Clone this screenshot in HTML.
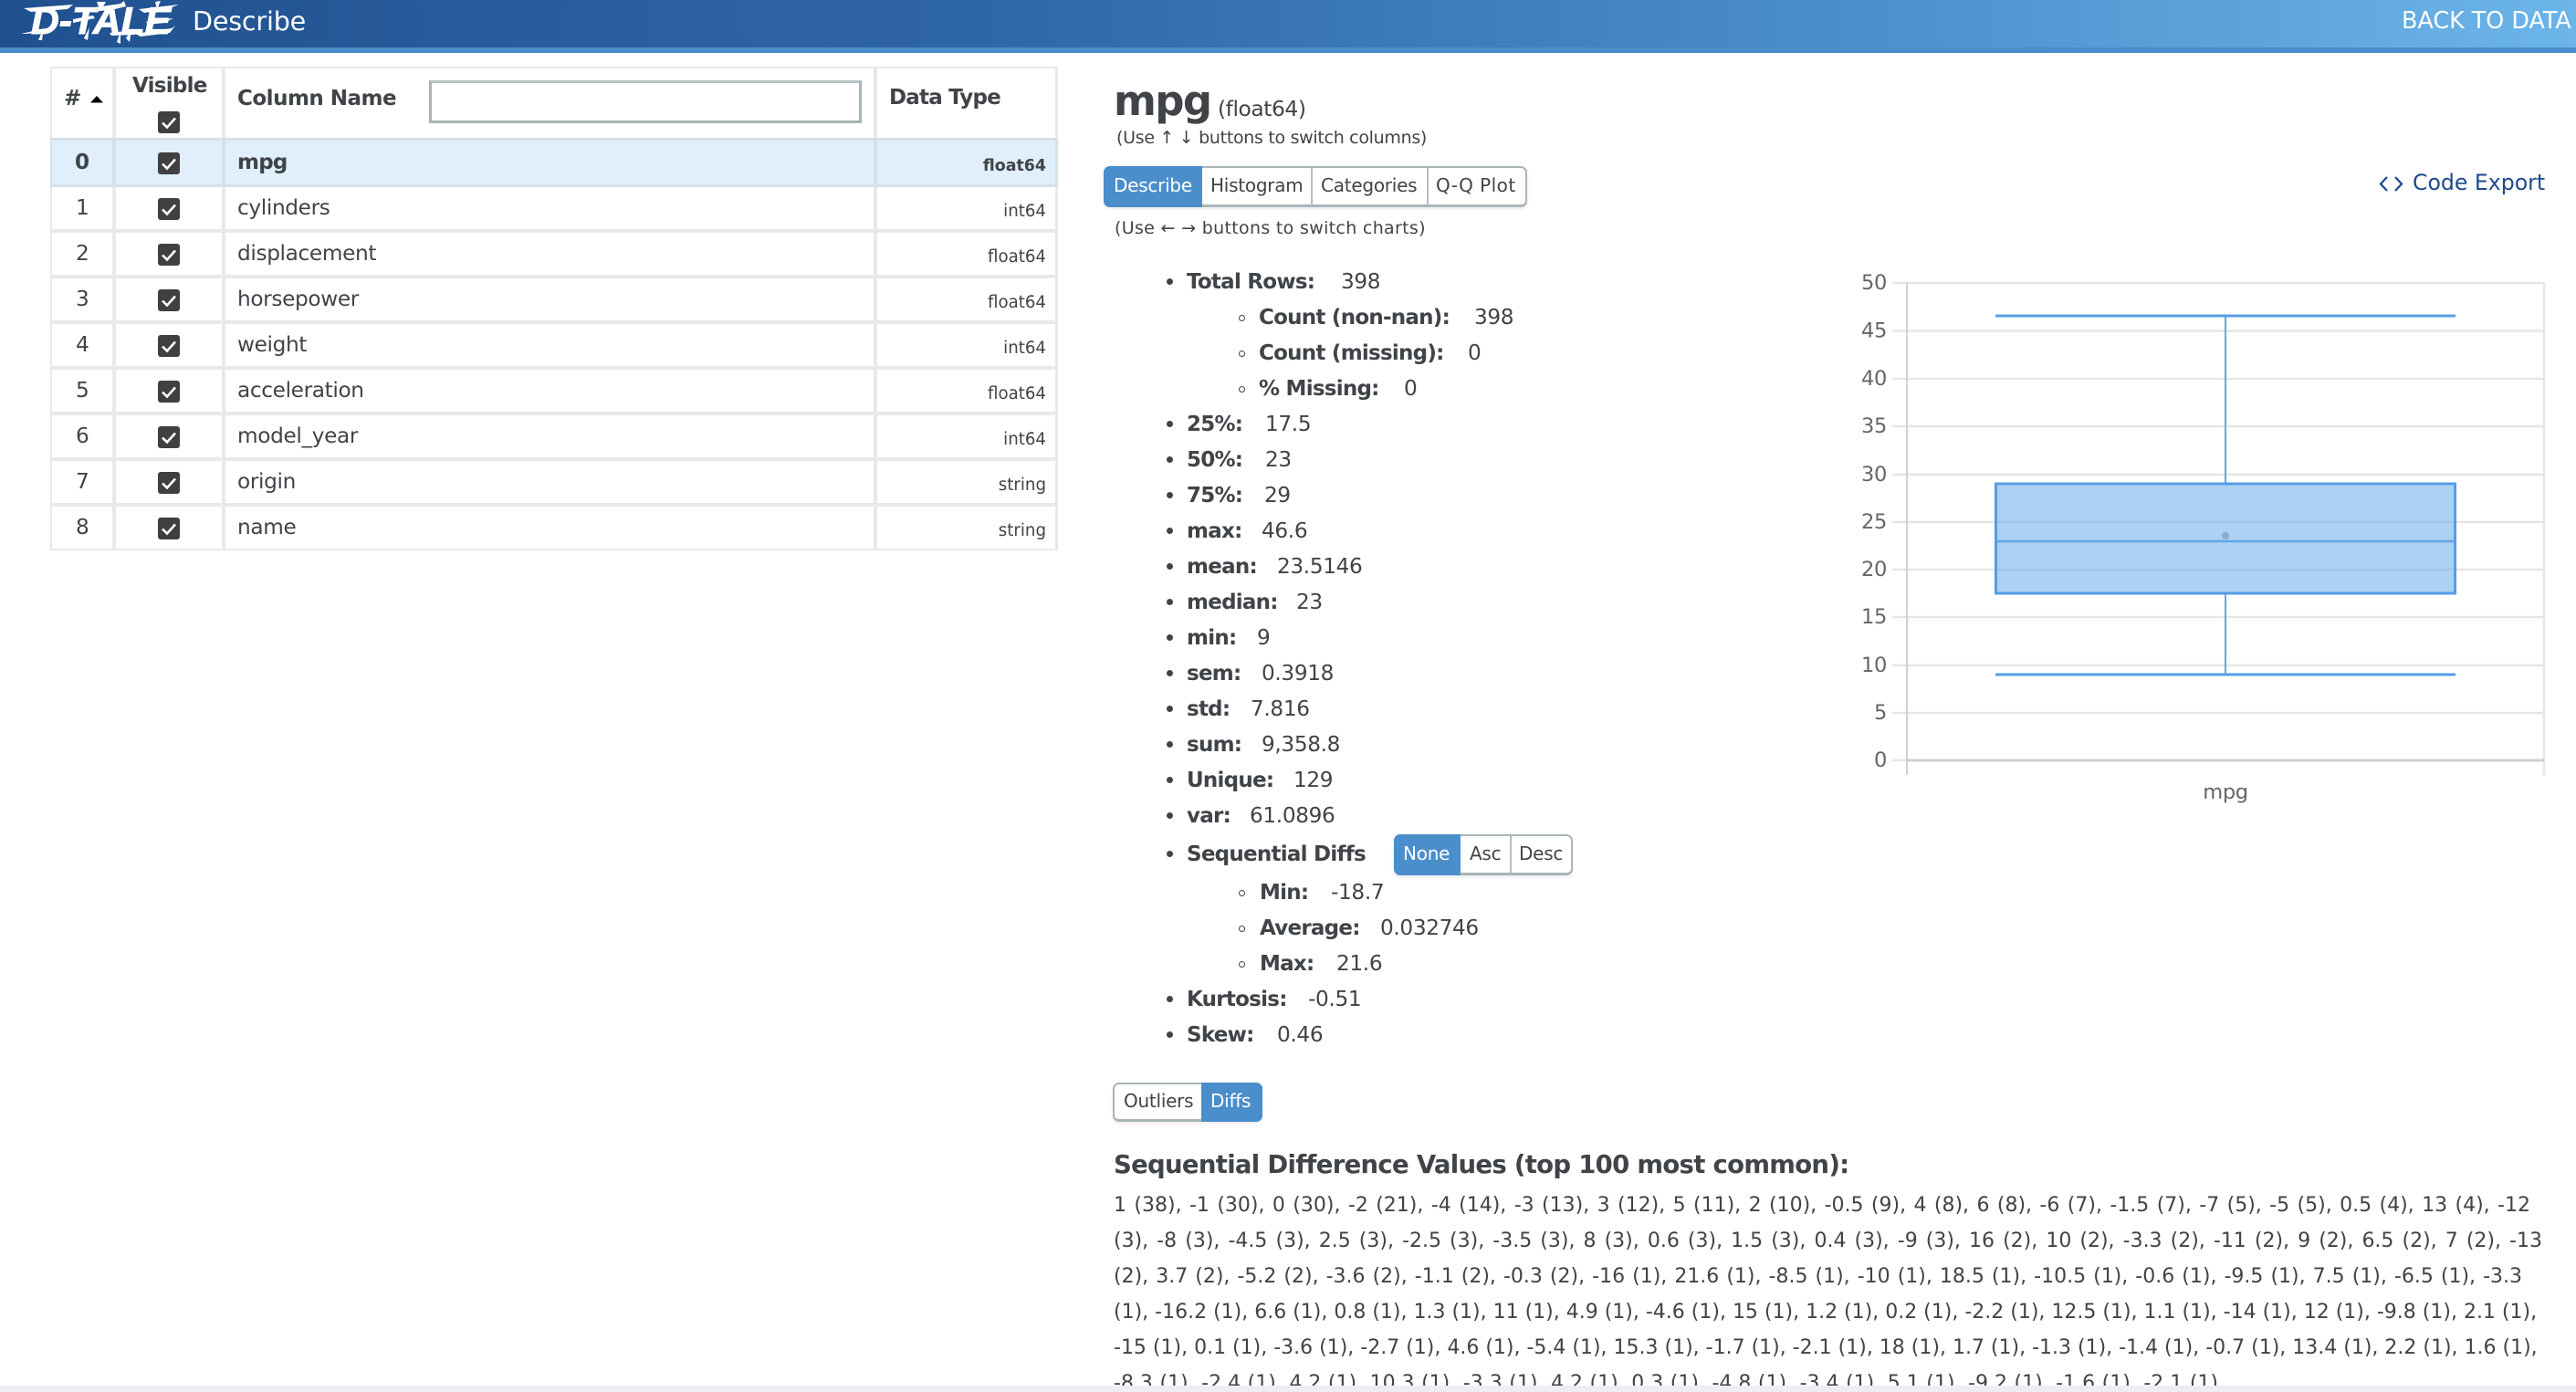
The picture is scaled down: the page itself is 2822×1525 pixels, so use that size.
<!DOCTYPE html>
<html lang="en"><head><meta charset="utf-8"><title>D-Tale Describe</title>
<style>
html,body{margin:0;padding:0;background:#fff}
#p{position:relative;width:2822px;height:1525px;overflow:hidden;background:#fff;font-family:"DejaVu Sans","Liberation Sans",sans-serif;color:#404448;font-size:23.2px;letter-spacing:-.35px}
.t{position:absolute;white-space:pre;line-height:40px;height:40px;margin-top:.5px}
.b{font-weight:700;font-size:23px;letter-spacing:-.75px}
.r{position:absolute;background:#fff}
.cb{position:absolute;width:24px;height:24px;background:#404040;border-radius:3px;left:173px}
.cb svg{display:block}
.d{position:absolute;left:1278px;width:7px;height:7px;border-radius:50%;background:#404448;margin-top:.5px}
.o{position:absolute;left:1357px;width:5px;height:5px;border-radius:50%;border:1.5px solid #404448;margin-top:1.5px}
.bg{position:absolute;border:2px solid #a9b5b9;border-bottom-width:3px;border-radius:7px;background:#fff;box-shadow:0 2px 3px rgba(0,0,0,.08)}
.on{position:absolute;background:#4a8ecb;border-radius:7px}
.sep{position:absolute;width:2px;background:#b4bfc3}
.bt{position:absolute;white-space:pre;font-size:20px;letter-spacing:-.25px;line-height:30px;height:30px}
.dt{position:absolute;right:1676px;font-size:18.2px;letter-spacing:0;line-height:30px;height:30px;white-space:pre;margin-top:1px}
.l{position:absolute;left:1220px;line-height:40px;height:40px;white-space:pre;font-size:22px;letter-spacing:0;text-align:justify;text-align-last:justify;margin-top:1px}
.ax{font-family:"DejaVu Sans",sans-serif;font-size:22.5px;letter-spacing:-.3px;fill:#666;text-anchor:end}
</style></head><body><div id="p">

<!-- header -->
<div style="position:absolute;left:0;top:0;width:2822px;height:52px;background:linear-gradient(90deg,#20508f 0%,#2f66a8 38%,#4a8ecb 71%,#6cb5e9 100%)"></div>
<div style="position:absolute;left:0;top:52px;width:2822px;height:6px;background:#4a8ecb"></div>
<svg style="position:absolute;left:20px;top:0" width="190" height="56" viewBox="0 0 190 56">
<g fill="#fff">
<polygon points="6,9 60,5 54,10 14,13"/>
<polygon points="3,37 30,31 28,35 8,37"/>
<polygon points="60,21 82,17 84,20 60,25"/>
<polygon points="70,10 112,4 116,1 118,7 102,11 76,13"/>
<polygon points="132,10 176,5 160,11 138,14"/>
<polygon points="140,24 170,20 160,25 142,27"/>
<polygon points="128,37 168,31 172,28 166,36 134,40"/>
<polygon points="100,36 130,33 128,38 102,39"/>
<polygon points="150,2 156,1 152,10"/>
<polygon points="86,2 96,2 90,12"/>
<polygon points="22,44 28,30 26,44"/>
<polygon points="74,38 78,30 76,44 72,42"/>
<polygon points="108,46 112,34 112,48"/>
<polygon points="118,42 124,32 122,46"/>
</g>
<text x="14" y="37" font-family="Liberation Sans" font-weight="700" font-style="italic" font-size="42" fill="#fff" textLength="153" lengthAdjust="spacingAndGlyphs" stroke="#fff" stroke-width="1" letter-spacing="0">D-TALE</text>
</svg>
<div class="t" style="left:211px;top:2px;color:#fff;font-size:28.6px;letter-spacing:-.2px">Describe</div>
<div class="t" style="left:2631px;top:1px;color:#fff;font-size:25.4px;letter-spacing:0">BACK TO DATA</div>

<!-- table -->
<div style="position:absolute;left:55px;top:73px;width:1104px;height:530px;background:#e9e9e9"></div>
<div class="r" style="left:57px;top:75px;width:66px;height:76px"></div>
<div class="r" style="left:127px;top:75px;width:116px;height:76px"></div>
<div class="r" style="left:247px;top:75px;width:710px;height:76px"></div>
<div class="r" style="left:961px;top:75px;width:195px;height:76px"></div>
<div style="position:absolute;left:55px;top:151px;width:1104px;height:54px;background:#d3e1e9"></div>
<div class="r" style="left:57px;top:154px;width:66px;height:48px;background:#e0effb"></div>
<div class="r" style="left:127px;top:154px;width:116px;height:48px;background:#e0effb"></div>
<div class="r" style="left:247px;top:154px;width:710px;height:48px;background:#e0effb"></div>
<div class="r" style="left:961px;top:154px;width:195px;height:48px;background:#e0effb"></div>

<div class="r" style="left:57px;top:205px;width:66px;height:46px"></div><div class="r" style="left:127px;top:205px;width:116px;height:46px"></div><div class="r" style="left:247px;top:205px;width:710px;height:46px"></div><div class="r" style="left:961px;top:205px;width:195px;height:46px"></div>
<div class="r" style="left:57px;top:255px;width:66px;height:46px"></div><div class="r" style="left:127px;top:255px;width:116px;height:46px"></div><div class="r" style="left:247px;top:255px;width:710px;height:46px"></div><div class="r" style="left:961px;top:255px;width:195px;height:46px"></div>
<div class="r" style="left:57px;top:305px;width:66px;height:46px"></div><div class="r" style="left:127px;top:305px;width:116px;height:46px"></div><div class="r" style="left:247px;top:305px;width:710px;height:46px"></div><div class="r" style="left:961px;top:305px;width:195px;height:46px"></div>
<div class="r" style="left:57px;top:355px;width:66px;height:46px"></div><div class="r" style="left:127px;top:355px;width:116px;height:46px"></div><div class="r" style="left:247px;top:355px;width:710px;height:46px"></div><div class="r" style="left:961px;top:355px;width:195px;height:46px"></div>
<div class="r" style="left:57px;top:405px;width:66px;height:46px"></div><div class="r" style="left:127px;top:405px;width:116px;height:46px"></div><div class="r" style="left:247px;top:405px;width:710px;height:46px"></div><div class="r" style="left:961px;top:405px;width:195px;height:46px"></div>
<div class="r" style="left:57px;top:455px;width:66px;height:46px"></div><div class="r" style="left:127px;top:455px;width:116px;height:46px"></div><div class="r" style="left:247px;top:455px;width:710px;height:46px"></div><div class="r" style="left:961px;top:455px;width:195px;height:46px"></div>
<div class="r" style="left:57px;top:505px;width:66px;height:46px"></div><div class="r" style="left:127px;top:505px;width:116px;height:46px"></div><div class="r" style="left:247px;top:505px;width:710px;height:46px"></div><div class="r" style="left:961px;top:505px;width:195px;height:46px"></div>
<div class="r" style="left:57px;top:555px;width:66px;height:46px"></div><div class="r" style="left:127px;top:555px;width:116px;height:46px"></div><div class="r" style="left:247px;top:555px;width:710px;height:46px"></div><div class="r" style="left:961px;top:555px;width:195px;height:46px"></div>

<div class="t b" style="left:70px;top:87px">#</div>
<svg style="position:absolute;left:99px;top:105px" width="14" height="8"><polygon points="7,0 14,7.5 0,7.5" fill="#000"/></svg>
<div class="t b" style="left:145px;top:73px">Visible</div>
<div class="t b" style="left:260px;top:87px;letter-spacing:-.5px">Column Name</div>
<div class="t b" style="left:974px;top:86px;letter-spacing:-.8px">Data Type</div>
<div style="position:absolute;left:470px;top:88px;width:468px;height:41px;border:3px solid #a8b4b8;border-top-color:#b5c0c4;background:#fff"></div>

<div class="t" style="left:82px;top:157px;font-weight:700">0</div>
<div class="t" style="left:83px;top:207px">1</div>
<div class="t" style="left:83px;top:257px">2</div>
<div class="t" style="left:83px;top:307px">3</div>
<div class="t" style="left:83px;top:357px">4</div>
<div class="t" style="left:83px;top:407px">5</div>
<div class="t" style="left:83px;top:457px">6</div>
<div class="t" style="left:83px;top:507px">7</div>
<div class="t" style="left:83px;top:557px">8</div>

<div class="t b" style="left:260px;top:157px">mpg</div>
<div class="t" style="left:260px;top:207px">cylinders</div>
<div class="t" style="left:260px;top:257px">displacement</div>
<div class="t" style="left:260px;top:307px">horsepower</div>
<div class="t" style="left:260px;top:357px">weight</div>
<div class="t" style="left:260px;top:407px">acceleration</div>
<div class="t" style="left:260px;top:457px">model_year</div>
<div class="t" style="left:260px;top:507px">origin</div>
<div class="t" style="left:260px;top:557px">name</div>

<div class="dt" style="top:166px;font-weight:700;font-size:17.4px">float64</div>
<div class="dt" style="top:216px">int64</div>
<div class="dt" style="top:266px">float64</div>
<div class="dt" style="top:316px">float64</div>
<div class="dt" style="top:366px">int64</div>
<div class="dt" style="top:416px">float64</div>
<div class="dt" style="top:466px">int64</div>
<div class="dt" style="top:516px">string</div>
<div class="dt" style="top:566px">string</div>

<div class="cb" style="top:122px"><svg width="24" height="24"><path d="M5 12.5l5 5L19 7.5" fill="none" stroke="#fff" stroke-width="2.6"/></svg></div>
<div class="cb" style="top:167px"><svg width="24" height="24"><path d="M5 12.5l5 5L19 7.5" fill="none" stroke="#fff" stroke-width="2.6"/></svg></div>
<div class="cb" style="top:217px"><svg width="24" height="24"><path d="M5 12.5l5 5L19 7.5" fill="none" stroke="#fff" stroke-width="2.6"/></svg></div>
<div class="cb" style="top:267px"><svg width="24" height="24"><path d="M5 12.5l5 5L19 7.5" fill="none" stroke="#fff" stroke-width="2.6"/></svg></div>
<div class="cb" style="top:317px"><svg width="24" height="24"><path d="M5 12.5l5 5L19 7.5" fill="none" stroke="#fff" stroke-width="2.6"/></svg></div>
<div class="cb" style="top:367px"><svg width="24" height="24"><path d="M5 12.5l5 5L19 7.5" fill="none" stroke="#fff" stroke-width="2.6"/></svg></div>
<div class="cb" style="top:417px"><svg width="24" height="24"><path d="M5 12.5l5 5L19 7.5" fill="none" stroke="#fff" stroke-width="2.6"/></svg></div>
<div class="cb" style="top:467px"><svg width="24" height="24"><path d="M5 12.5l5 5L19 7.5" fill="none" stroke="#fff" stroke-width="2.6"/></svg></div>
<div class="cb" style="top:517px"><svg width="24" height="24"><path d="M5 12.5l5 5L19 7.5" fill="none" stroke="#fff" stroke-width="2.6"/></svg></div>
<div class="cb" style="top:567px"><svg width="24" height="24"><path d="M5 12.5l5 5L19 7.5" fill="none" stroke="#fff" stroke-width="2.6"/></svg></div>

<!-- title -->
<div class="t" style="left:1220px;top:85px;font-size:45px;letter-spacing:-1.6px;font-weight:700;line-height:50px;height:50px">mpg</div>
<div class="t" style="left:1334px;top:98px;font-size:23.4px;letter-spacing:-.45px">(float64)</div>
<div class="t" style="left:1223px;top:130px;font-size:19px;letter-spacing:-.3px">(Use ↑ ↓ buttons to switch columns)</div>

<!-- tabs -->
<div class="bg" style="left:1209px;top:182px;width:460px;height:40px"></div>
<div class="on" style="left:1209px;top:182px;width:108px;height:45px;border-radius:7px 0 0 7px"></div>
<div class="sep" style="left:1436px;top:184px;height:41px"></div>
<div class="sep" style="left:1563px;top:184px;height:41px"></div>
<div class="bt" style="left:1220px;top:188px;color:#fff">Describe</div>
<div class="bt" style="left:1326px;top:188px">Histogram</div>
<div class="bt" style="left:1447px;top:188px">Categories</div>
<div class="bt" style="left:1573px;top:188px;letter-spacing:.45px">Q-Q Plot</div>
<div class="t" style="left:1221px;top:229px;font-size:19px;letter-spacing:.32px">(Use ← → buttons to switch charts)</div>

<svg style="position:absolute;left:2606px;top:190px" width="28" height="22" viewBox="0 0 28 22"><path d="M9 4L2 11.500l7 7.500M18 4l7 7.500-7 7.500" fill="none" stroke="#1f4a8c" stroke-width="2.3"/></svg>
<div class="t" style="left:2643px;top:179px;font-size:23.6px;letter-spacing:0;color:#1f4a8c">Code Export</div>

<!-- stats -->
<div class="d" style="top:304px"></div><div class="t b" style="left:1300px;top:288px">Total Rows:</div><div class="t" style="left:1469px;top:288px">398</div>
<div class="o" style="top:343px"></div><div class="t b" style="left:1379px;top:327px">Count (non-nan):</div><div class="t" style="left:1615px;top:327px">398</div>
<div class="o" style="top:382px"></div><div class="t b" style="left:1379px;top:366px">Count (missing):</div><div class="t" style="left:1608px;top:366px">0</div>
<div class="o" style="top:421px"></div><div class="t b" style="left:1379px;top:405px">% Missing:</div><div class="t" style="left:1538px;top:405px">0</div>
<div class="d" style="top:460px"></div><div class="t b" style="left:1300px;top:444px">25%:</div><div class="t" style="left:1386px;top:444px">17.5</div>
<div class="d" style="top:499px"></div><div class="t b" style="left:1300px;top:483px">50%:</div><div class="t" style="left:1386px;top:483px">23</div>
<div class="d" style="top:538px"></div><div class="t b" style="left:1300px;top:522px">75%:</div><div class="t" style="left:1385px;top:522px">29</div>
<div class="d" style="top:577px"></div><div class="t b" style="left:1300px;top:561px">max:</div><div class="t" style="left:1382px;top:561px">46.6</div>
<div class="d" style="top:616px"></div><div class="t b" style="left:1300px;top:600px">mean:</div><div class="t" style="left:1399px;top:600px">23.5146</div>
<div class="d" style="top:655px"></div><div class="t b" style="left:1300px;top:639px">median:</div><div class="t" style="left:1420px;top:639px">23</div>
<div class="d" style="top:694px"></div><div class="t b" style="left:1300px;top:678px">min:</div><div class="t" style="left:1377px;top:678px">9</div>
<div class="d" style="top:733px"></div><div class="t b" style="left:1300px;top:717px">sem:</div><div class="t" style="left:1382px;top:717px">0.3918</div>
<div class="d" style="top:772px"></div><div class="t b" style="left:1300px;top:756px">std:</div><div class="t" style="left:1370px;top:756px">7.816</div>
<div class="d" style="top:811px"></div><div class="t b" style="left:1300px;top:795px">sum:</div><div class="t" style="left:1382px;top:795px">9,358.8</div>
<div class="d" style="top:850px"></div><div class="t b" style="left:1300px;top:834px">Unique:</div><div class="t" style="left:1417px;top:834px">129</div>
<div class="d" style="top:889px"></div><div class="t b" style="left:1300px;top:873px">var:</div><div class="t" style="left:1369px;top:873px">61.0896</div>
<div class="d" style="top:931px"></div><div class="t b" style="left:1300px;top:915px">Sequential Diffs</div>
<div class="bg" style="left:1527px;top:914px;width:192px;height:40px"></div>
<div class="on" style="left:1527px;top:914px;width:73px;height:45px;border-radius:7px 0 0 7px"></div>
<div class="sep" style="left:1654px;top:916px;height:41px"></div>
<div class="bt" style="left:1537px;top:920px;color:#fff">None</div>
<div class="bt" style="left:1610px;top:920px">Asc</div>
<div class="bt" style="left:1664px;top:920px">Desc</div>
<div class="o" style="top:973px"></div><div class="t b" style="left:1380px;top:957px">Min:</div><div class="t" style="left:1458px;top:957px">-18.7</div>
<div class="o" style="top:1012px"></div><div class="t b" style="left:1380px;top:996px">Average:</div><div class="t" style="left:1512px;top:996px">0.032746</div>
<div class="o" style="top:1051px"></div><div class="t b" style="left:1380px;top:1035px">Max:</div><div class="t" style="left:1464px;top:1035px">21.6</div>
<div class="d" style="top:1090px"></div><div class="t b" style="left:1300px;top:1074px">Kurtosis:</div><div class="t" style="left:1433px;top:1074px">-0.51</div>
<div class="d" style="top:1129px"></div><div class="t b" style="left:1300px;top:1113px">Skew:</div><div class="t" style="left:1399px;top:1113px">0.46</div>

<!-- outliers -->
<div class="bg" style="left:1219px;top:1186px;width:160px;height:38px"></div>
<div class="on" style="left:1316px;top:1186px;width:67px;height:43px;border-radius:0 7px 7px 0"></div>
<div class="bt" style="left:1231px;top:1191px">Outliers</div>
<div class="bt" style="left:1326px;top:1191px;color:#fff">Diffs</div>

<div class="t" style="left:1220px;top:1255px;font-size:27.5px;font-weight:700;letter-spacing:-.7px">Sequential Difference Values (top 100 most common):</div>
<div class="l" style="top:1300px;width:1552px">1 (38), -1 (30), 0 (30), -2 (21), -4 (14), -3 (13), 3 (12), 5 (11), 2 (10), -0.5 (9), 4 (8), 6 (8), -6 (7), -1.5 (7), -7 (5), -5 (5), 0.5 (4), 13 (4), -12</div>
<div class="l" style="top:1339px;width:1565px">(3), -8 (3), -4.5 (3), 2.5 (3), -2.5 (3), -3.5 (3), 8 (3), 0.6 (3), 1.5 (3), 0.4 (3), -9 (3), 16 (2), 10 (2), -3.3 (2), -11 (2), 9 (2), 6.5 (2), 7 (2), -13</div>
<div class="l" style="top:1378px;width:1543px">(2), 3.7 (2), -5.2 (2), -3.6 (2), -1.1 (2), -0.3 (2), -16 (1), 21.6 (1), -8.5 (1), -10 (1), 18.5 (1), -10.5 (1), -0.6 (1), -9.5 (1), 7.5 (1), -6.5 (1), -3.3</div>
<div class="l" style="top:1417px;width:1543px">(1), -16.2 (1), 6.6 (1), 0.8 (1), 1.3 (1), 11 (1), 4.9 (1), -4.6 (1), 15 (1), 1.2 (1), 0.2 (1), -2.2 (1), 12.5 (1), 1.1 (1), -14 (1), 12 (1), -9.8 (1), 2.1 (1),</div>
<div class="l" style="top:1456px;width:1555px">-15 (1), 0.1 (1), -3.6 (1), -2.7 (1), 4.6 (1), -5.4 (1), 15.3 (1), -1.7 (1), -2.1 (1), 18 (1), 1.7 (1), -1.3 (1), -1.4 (1), -0.7 (1), 13.4 (1), 2.2 (1), 1.6 (1),</div>
<div class="l" style="top:1495px;width:1210px">-8.3 (1), -2.4 (1), 4.2 (1), 10.3 (1), -3.3 (1), 4.2 (1), 0.3 (1), -4.8 (1), -3.4 (1), 5.1 (1), -9.2 (1), -1.6 (1), -2.1 (1)</div>
<div style="position:absolute;left:0;top:1518px;width:2822px;height:7px;background:#eceef1"></div>

<!-- chart -->
<svg style="position:absolute;left:2040px;top:280px" width="782" height="620" viewBox="2040 280 782 620">
<g stroke="#e6e6e6" stroke-width="2.5">
<line x1="2073" x2="2787" y1="310" y2="310"/><line x1="2073" x2="2787" y1="362.5" y2="362.5"/><line x1="2073" x2="2787" y1="415" y2="415"/><line x1="2073" x2="2787" y1="467" y2="467"/><line x1="2073" x2="2787" y1="520" y2="520"/><line x1="2073" x2="2787" y1="572" y2="572"/><line x1="2073" x2="2787" y1="624" y2="624"/><line x1="2073" x2="2787" y1="676" y2="676"/><line x1="2073" x2="2787" y1="729" y2="729"/><line x1="2073" x2="2787" y1="781" y2="781"/><line x1="2073" x2="2089" y1="833" y2="833"/>
<line x1="2787" x2="2787" y1="309" y2="849"/>
</g>
<line x1="2089" x2="2089" y1="309" y2="849" stroke="#d0d0d0" stroke-width="2"/>
<line x1="2089" x2="2787" y1="833" y2="833" stroke="#cfcfcf" stroke-width="3"/>
<line x1="2438" x2="2438" y1="346" y2="530" stroke="#62a6e6" stroke-width="2"/>
<line x1="2438" x2="2438" y1="650" y2="739" stroke="#62a6e6" stroke-width="2"/>
<line x1="2186" x2="2690" y1="346" y2="346" stroke="#549ee4" stroke-width="3"/>
<line x1="2186" x2="2690" y1="739" y2="739" stroke="#549ee4" stroke-width="3"/>
<rect x="2186.5" y="530" width="503" height="120" fill="#5ca3e8" fill-opacity=".5" stroke="#549ee4" stroke-width="3"/>
<line x1="2186" x2="2690" y1="593" y2="593" stroke="#549ee4" stroke-width="2.5" stroke-opacity=".85"/>
<circle cx="2438" cy="587" r="3.5" fill="#8fa9c6" stroke="#8fa9c6" stroke-opacity=".6" stroke-width="2"/>
<text class="ax" x="2067" y="317">50</text><text class="ax" x="2067" y="369.500">45</text><text class="ax" x="2067" y="422">40</text><text class="ax" x="2067" y="474">35</text><text class="ax" x="2067" y="527">30</text><text class="ax" x="2067" y="579">25</text><text class="ax" x="2067" y="631">20</text><text class="ax" x="2067" y="683">15</text><text class="ax" x="2067" y="736">10</text><text class="ax" x="2067" y="788">5</text><text class="ax" x="2067" y="840">0</text>
<text class="ax" style="text-anchor:middle" x="2438" y="875">mpg</text>
</svg>
</div></body></html>
